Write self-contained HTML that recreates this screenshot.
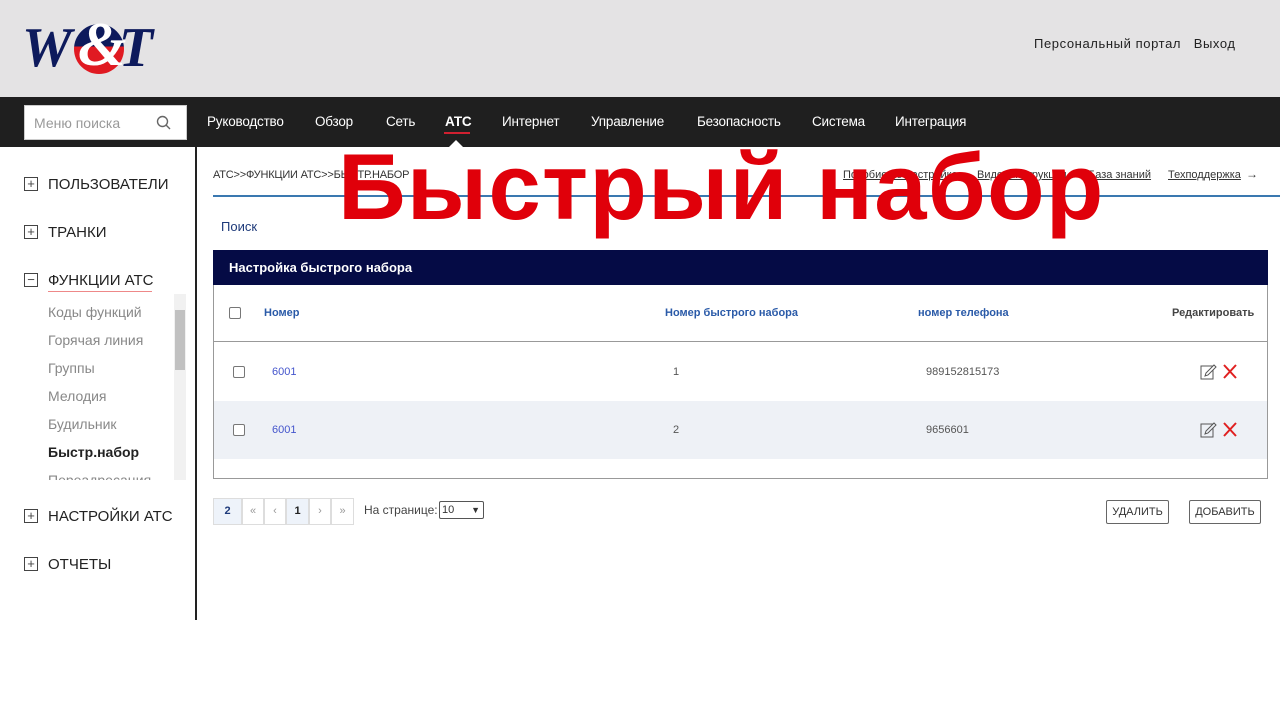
<!DOCTYPE html>
<html><head><meta charset="utf-8"><style>
*{margin:0;padding:0;box-sizing:border-box}
body{width:1280px;height:720px;background:#fff;font-family:"Liberation Sans",sans-serif;position:relative;overflow:hidden;color:#333}
.a{position:absolute}
#hdr{left:0;top:0;width:1280px;height:97px;background:#e4e3e4}
#nav{left:0;top:97px;width:1280px;height:50px;background:#1f1f1f}
.nv{top:114px;color:#fff;font-size:13.5px;letter-spacing:-0.2px}
.sb{font-size:15px;color:#222;left:48px}
.bx{left:24px;width:14px;height:14px;border:1.5px solid #444;font-size:13px;line-height:11px;text-align:center;color:#444}
.si{left:48px;font-size:14px;color:#888}
.cb{width:12px;height:12px;border:1px solid #777;border-radius:2px;background:#fff}
.pg{top:498px;height:27px;border:1px solid #ddd;font-size:11px;text-align:center;line-height:25px;color:#999}
.btn{top:500px;height:24px;border:1px solid #666;font-size:11px;line-height:22px;text-align:center;color:#333;border-radius:2px}
.lk{top:169px;font-size:11px;color:#333;text-decoration:underline}
</style></head><body>
<div id="hdr" class="a"></div>
<div class="a" style="left:22px;top:20px;font-family:'Liberation Serif',serif;font-style:italic;font-weight:bold;font-size:56px;color:#0d1a5c;letter-spacing:-3px;line-height:56px">W<span style="display:inline-block;width:50px"></span>T</div>
<div class="a" style="left:74px;top:24px;width:50px;height:50px;border-radius:50%;background:linear-gradient(#0d1a5c 45%,#e01a22 45%)"></div>
<div class="a" style="left:78px;top:14px;font-family:'Liberation Serif',serif;font-weight:bold;font-style:italic;font-size:62px;color:#fff;line-height:62px">&amp;</div>
<div class="a" style="left:1034px;top:36px;font-size:13px;color:#222;letter-spacing:0.6px">Персональный портал&nbsp;&nbsp;&nbsp;Выход</div>
<div id="nav" class="a"></div>
<div class="a" style="left:24px;top:105px;width:163px;height:35px;background:#fff;border:1px solid #ccc"></div>
<div class="a" style="left:34px;top:115px;font-size:14px;color:#999">Меню поиска</div>
<svg class="a" style="left:156px;top:115px" width="16" height="16"><circle cx="6.5" cy="6.5" r="5" fill="none" stroke="#666" stroke-width="1.4"/><line x1="10" y1="10" x2="14" y2="14" stroke="#666" stroke-width="1.4"/></svg>
<div class="a nv" style="left:207px">Руководство</div>
<div class="a nv" style="left:315px">Обзор</div>
<div class="a nv" style="left:386px">Сеть</div>
<div class="a nv" style="left:445px;font-weight:bold">АТС</div>
<div class="a" style="left:444px;top:132px;width:26px;height:2px;background:#d02030"></div>
<div class="a" style="left:449px;top:140px;width:0;height:0;border-left:7px solid transparent;border-right:7px solid transparent;border-bottom:7px solid #fff"></div>
<div class="a nv" style="left:502px">Интернет</div>
<div class="a nv" style="left:591px">Управление</div>
<div class="a nv" style="left:697px">Безопасность</div>
<div class="a nv" style="left:812px">Система</div>
<div class="a nv" style="left:895px">Интеграция</div>
<div class="a" style="left:195px;top:147px;width:1.5px;height:473px;background:#222"></div>
<div class="a bx" style="top:177px">+</div><div class="a sb" style="top:176px">ПОЛЬЗОВАТЕЛИ</div>
<div class="a bx" style="top:225px">+</div><div class="a sb" style="top:224px">ТРАНКИ</div>
<div class="a bx" style="top:273px">−</div><div class="a sb" style="top:272px">ФУНКЦИИ АТС</div>
<div class="a" style="left:48px;top:291px;width:104px;height:1px;background:#e88"></div>
<div class="a" style="left:174px;top:294px;width:12px;height:186px;background:#f1f1f1"></div>
<div class="a" style="left:175px;top:310px;width:10px;height:60px;background:#c1c1c1"></div>
<div class="a" style="left:40px;top:300px;width:134px;height:180px;overflow:hidden">
<div class="a si" style="left:8px;top:4px">Коды функций</div>
<div class="a si" style="left:8px;top:32px">Горячая линия</div>
<div class="a si" style="left:8px;top:60px">Группы</div>
<div class="a si" style="left:8px;top:88px">Мелодия</div>
<div class="a si" style="left:8px;top:116px">Будильник</div>
<div class="a si" style="left:8px;top:144px;color:#222;font-weight:bold">Быстр.набор</div>
<div class="a si" style="left:8px;top:172px">Переадресация</div></div>
<div class="a bx" style="top:509px">+</div><div class="a sb" style="top:508px">НАСТРОЙКИ АТС</div>
<div class="a bx" style="top:557px">+</div><div class="a sb" style="top:556px">ОТЧЕТЫ</div>
<div class="a" style="left:213px;top:169px;font-size:11px;color:#333;letter-spacing:-0.2px">АТС&gt;&gt;ФУНКЦИИ АТС&gt;&gt;БЫСТР.НАБОР</div>
<div class="a lk" style="left:843px">Пособие по настройке</div>
<div class="a lk" style="left:977px">Видеоинструкция</div>
<div class="a lk" style="left:1088px">База знаний</div>
<div class="a lk" style="left:1168px">Техподдержка</div><div class="a" style="left:1246px;top:167px;font-size:12px">→</div>
<div class="a" style="left:213px;top:195px;width:1067px;height:2px;background:#3a78b0"></div>
<div class="a" style="left:221px;top:219px;font-size:13px;color:#1e3a7a">Поиск</div>
<div class="a" style="left:213px;top:250px;width:1055px;height:229px;border:1px solid #999;border-top:none"></div>
<div class="a" style="left:213px;top:250px;width:1055px;height:35px;background:#050b45"></div>
<div class="a" style="left:229px;top:260px;font-size:13px;font-weight:bold;color:#fff">Настройка быстрого набора</div>
<div class="a" style="left:213px;top:341px;width:1055px;height:1px;background:#999"></div>
<div class="a" style="left:214px;top:401px;width:1053px;height:58px;background:#eef1f6"></div>
<div class="a cb" style="left:229px;top:307px"></div>
<div class="a" style="left:264px;top:307px;font-size:11px;font-weight:bold;color:#2a5aa8">Номер</div>
<div class="a" style="left:665px;top:307px;font-size:11px;font-weight:bold;color:#2a5aa8">Номер быстрого набора</div>
<div class="a" style="left:918px;top:307px;font-size:11px;font-weight:bold;color:#2a5aa8">номер телефона</div>
<div class="a" style="left:1172px;top:307px;font-size:11px;font-weight:bold;color:#444">Редактировать</div>
<div class="a cb" style="left:233px;top:366px"></div>
<div class="a" style="left:272px;top:366px;font-size:11px;color:#4455cc">6001</div>
<div class="a" style="left:673px;top:366px;font-size:11px;color:#555">1</div>
<div class="a" style="left:926px;top:366px;font-size:11px;color:#555">989152815173</div>
<div class="a cb" style="left:233px;top:424px"></div>
<div class="a" style="left:272px;top:424px;font-size:11px;color:#4455cc">6001</div>
<div class="a" style="left:673px;top:424px;font-size:11px;color:#555">2</div>
<div class="a" style="left:926px;top:424px;font-size:11px;color:#555">9656601</div>
<svg class="a" style="left:1200px;top:363px" width="40" height="18"><rect x="1" y="3" width="12" height="13" fill="none" stroke="#555"/><path d="M5 13 L6 10 L14 2 L16 4 L8 12 Z" fill="#fff" stroke="#555"/><path d="M24 2 L36 15 M36 2 L24 15" stroke="#e02020" stroke-width="2"/></svg>
<svg class="a" style="left:1200px;top:421px" width="40" height="18"><rect x="1" y="3" width="12" height="13" fill="none" stroke="#555"/><path d="M5 13 L6 10 L14 2 L16 4 L8 12 Z" fill="#eef1f6" stroke="#555"/><path d="M24 2 L36 15 M36 2 L24 15" stroke="#e02020" stroke-width="2"/></svg>
<div class="a pg" style="left:213px;width:29px;background:#eef3fa;color:#1e3a7a;font-weight:bold">2</div>
<div class="a pg" style="left:242px;width:22px">«</div>
<div class="a pg" style="left:264px;width:22px">‹</div>
<div class="a pg" style="left:286px;width:23px;background:#eef3fa;color:#222;font-weight:bold">1</div>
<div class="a pg" style="left:309px;width:22px">›</div>
<div class="a pg" style="left:331px;width:23px">»</div>
<div class="a" style="left:364px;top:503px;font-size:12px;color:#444">На странице:</div>
<div class="a" style="left:439px;top:501px;width:45px;height:18px;border:1px solid #555;border-radius:2px;font-size:11px;line-height:16px;padding-left:2px">10<span style="float:right;margin-right:3px;font-size:9px">▼</span></div>
<div class="a btn" style="left:1106px;width:63px">УДАЛИТЬ</div>
<div class="a btn" style="left:1189px;width:72px">ДОБАВИТЬ</div>
<div class="a" style="left:338px;top:133px;font-size:94px;font-weight:bold;color:#e0000a;white-space:nowrap;letter-spacing:1.3px">Быстрый набор</div>
</body></html>
